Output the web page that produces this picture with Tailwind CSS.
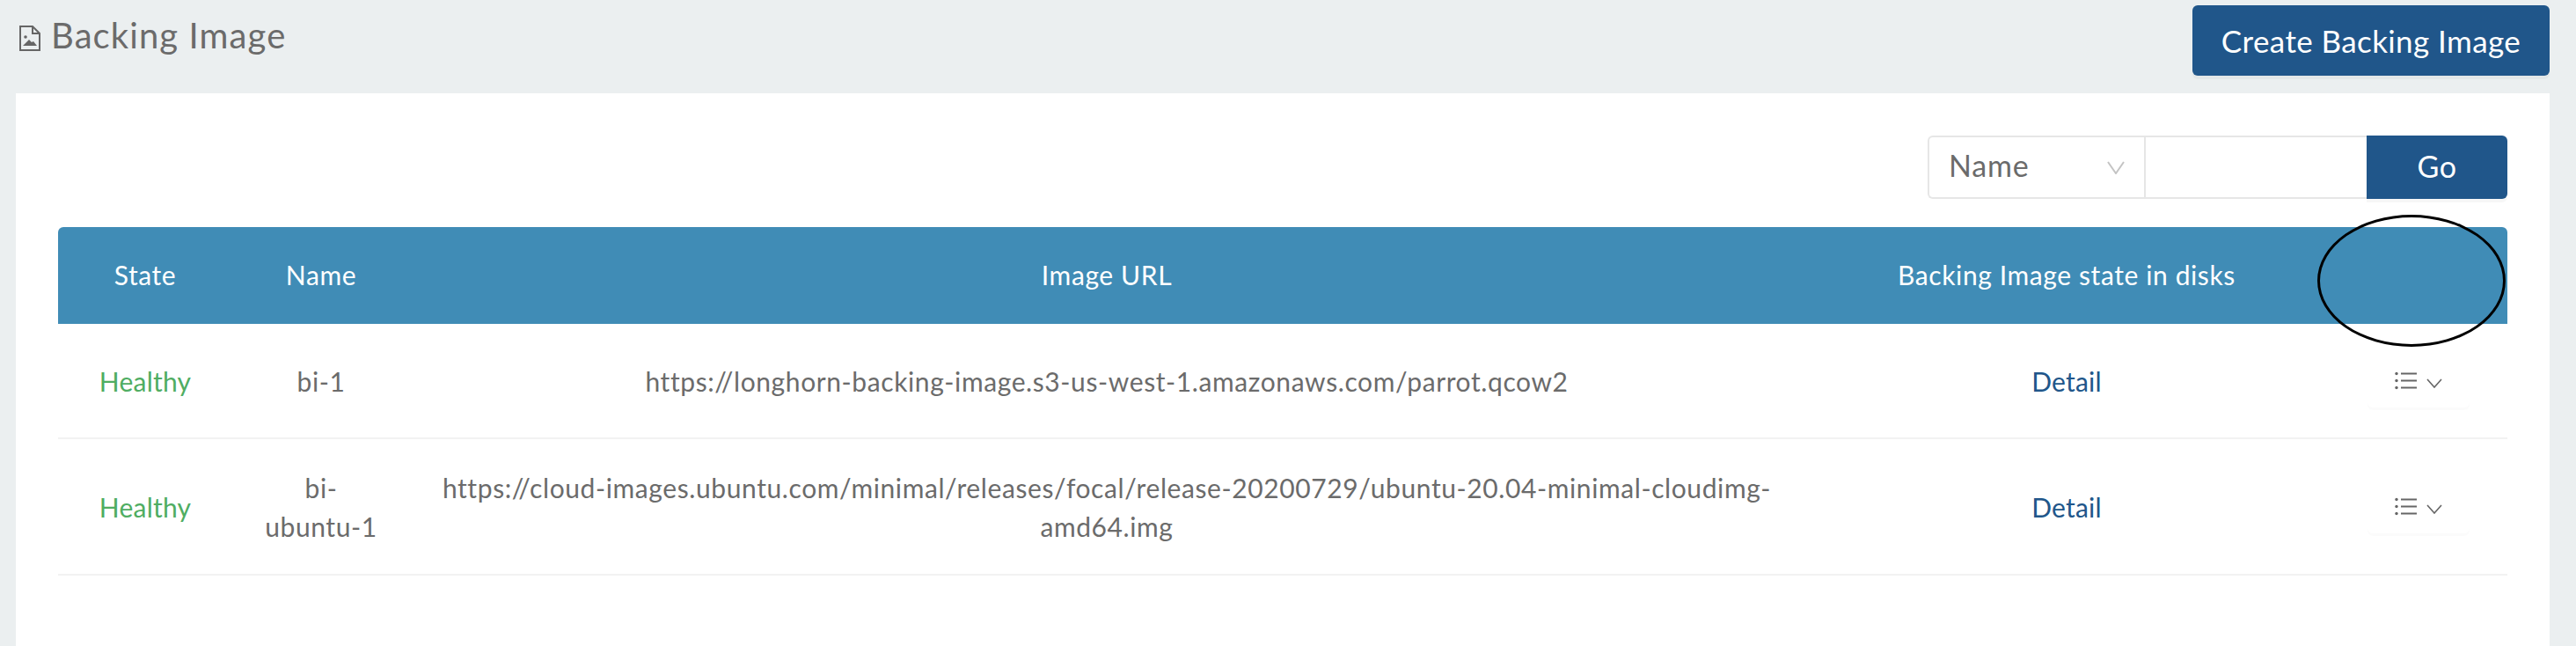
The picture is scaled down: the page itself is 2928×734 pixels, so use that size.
<!DOCTYPE html>
<html lang="en">
<head>
    <meta charset="UTF-8">
    <title>Backing Image</title>
    <script src="https://cdn.jsdelivr.net/npm/@tailwindcss/browser@4"></script>
</head>
<body class="bg-[#ebeff0] font-['Lato',sans-serif] text-[#6b6b6b] overflow-hidden">
    <div class="relative h-[734px] w-[2928px] pl-[18px] pr-[30px]">
        <!-- Header -->
        <div class="flex justify-between h-[106px] pt-[6px]">
            <h1 class="flex items-start gap-[11px] pt-[8px] pl-[3px] text-[40px] leading-[52px] tracking-[1.1px] font-normal">
                <svg class="mt-[14px] w-[26px] h-[31px]" viewBox="0 0 26 31" fill="none" stroke="#666" stroke-width="2">
                    <path d="M2 2h14l8 8v19H2z"/>
                    <path d="M16 2v8h8"/>
                    <circle cx="8" cy="14" r="1.8" fill="#666" stroke="none"/>
                    <path d="M5 24l7-7 3 3 2-1 4 5z" fill="#666" stroke="none"/>
                </svg>
                Backing Image
            </h1>
            <button class="h-[80px] w-[406px] rounded-[6px] bg-[#20568a] text-[35px] tracking-[0.4px] text-white shadow-[0_4px_0_rgba(0,0,0,0.03)]">Create Backing Image</button>
        </div>

        <!-- Card -->
        <div class="h-[628px] bg-white px-[48px] pt-[48px]">
            <!-- Search -->
            <div class="flex justify-end h-[72px] mb-[32px]">
                <div class="flex items-center justify-between w-[246px] pl-[22px] pr-[22px] border-2 border-r-0 border-[#e6e6e6] rounded-l-[6px] text-[34px] tracking-[0.8px]">
                    <span class="pb-[5px]">Name</span>
                    <svg class="w-[20px] h-[15px]" viewBox="0 0 20 15" fill="none" stroke="#c4c4c4" stroke-width="2"><path d="M1 1l9 13 9-13"/></svg>
                </div>
                <div class="w-[253px] border-2 border-r-0 border-[#e6e6e6]"></div>
                <button class="w-[160px] pb-[3px] rounded-r-[6px] bg-[#20568a] text-[34px] tracking-[0.6px] text-white shadow-[0_4px_0_rgba(0,0,0,0.03)]">Go</button>
            </div>

            <!-- Table -->
            <table class="w-full table-fixed border-collapse text-center text-[30px] leading-[44px] tracking-[0.6px]">
                <colgroup>
                    <col class="w-[198px]">
                    <col class="w-[202px]">
                    <col class="w-[1584px]">
                    <col class="w-[598px]">
                    <col class="w-[202px]">
                </colgroup>
                <thead>
                    <tr class="h-[110px] bg-[#408cb6] text-white">
                        <th class="font-normal rounded-tl-[6px] pb-[2px]">State</th>
                        <th class="font-normal pb-[2px]">Name</th>
                        <th class="font-normal pb-[2px]">Image URL</th>
                        <th class="font-normal pb-[2px]">Backing Image state in disks</th>
                        <th class="rounded-tr-[6px]"></th>
                    </tr>
                </thead>
                <tbody>
                    <tr class="h-[130px] border-b-2 border-[#f2f2f2]">
                        <td class="text-[#4fad62] tracking-[0.2px]">Healthy</td>
                        <td class="px-[36px]">bi-1</td>
                        <td class="px-[32px]">https://longhorn-backing-image.s3-us-west-1.amazonaws.com/parrot.qcow2</td>
                        <td class="text-[#20568a] tracking-[0.2px]">Detail</td>
                        <td>
                            <div class="mx-auto flex h-[60px] w-[116px] items-center justify-center gap-[11px] rounded-[6px] shadow-[0_3px_0_rgba(0,0,0,0.015)]">
                                <svg class="w-[25px] h-[21px]" viewBox="0 0 25 21" fill="#666"><circle cx="2" cy="2.5" r="1.7"/><circle cx="2" cy="10.5" r="1.7"/><circle cx="2" cy="18.5" r="1.7"/><path d="M7 1.5h18v2H7zM7 9.5h18v2H7zM7 17.5h18v2H7z"/></svg>
                                <svg class="mt-[6px] w-[18px] h-[11px]" viewBox="0 0 18 11" fill="none" stroke="#666" stroke-width="1.6"><path d="M1 1l8 9 8-9"/></svg>
                            </div>
                        </td>
                    </tr>
                    <tr class="h-[155px] border-b-2 border-[#f2f2f2]">
                        <td class="text-[#4fad62] tracking-[0.2px]">Healthy</td>
                        <td class="px-[36px]">bi-ubuntu-1</td>
                        <td class="px-[32px]">https://cloud-images.ubuntu.com/minimal/releases/focal/release-20200729/ubuntu-20.04-minimal-cloudimg-amd64.img</td>
                        <td class="text-[#20568a] tracking-[0.2px]">Detail</td>
                        <td>
                            <div class="mx-auto flex h-[60px] w-[116px] items-center justify-center gap-[11px] rounded-[6px] shadow-[0_3px_0_rgba(0,0,0,0.015)]">
                                <svg class="w-[25px] h-[21px]" viewBox="0 0 25 21" fill="#666"><circle cx="2" cy="2.5" r="1.7"/><circle cx="2" cy="10.5" r="1.7"/><circle cx="2" cy="18.5" r="1.7"/><path d="M7 1.5h18v2H7zM7 9.5h18v2H7zM7 17.5h18v2H7z"/></svg>
                                <svg class="mt-[6px] w-[18px] h-[11px]" viewBox="0 0 18 11" fill="none" stroke="#666" stroke-width="1.6"><path d="M1 1l8 9 8-9"/></svg>
                            </div>
                        </td>
                    </tr>
                </tbody>
            </table>
        </div>

        <!-- Annotation drawn over the table -->
        <div class="absolute left-[2634px] top-[244px] h-[150px] w-[214px] rounded-[50%] border-[3px] border-black"></div>
    </div>
</body>
</html>
